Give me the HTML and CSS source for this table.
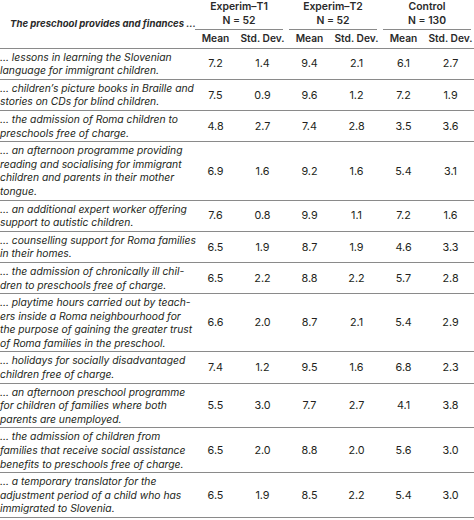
FILE: index.html
```html
<!DOCTYPE html>
<html lang="en">
<head>
<meta charset="utf-8">
<title>Preschool table</title>
<link rel="stylesheet" href="styles.css">
</head>
<body>
<table class="tbl">
  <colgroup>
    <col class="c-item">
    <col class="c-num"><col class="c-num"><col class="c-num"><col class="c-num"><col class="c-num"><col class="c-num">
  </colgroup>
  <thead>
    <tr class="grp-row">
      <th class="item-head" rowspan="2">The preschool provides and finances …</th>
      <th colspan="2" class="grp"><div class="grp-in">Experim–T1<br>N = 52</div></th>
      <th colspan="2" class="grp"><div class="grp-in">Experim–T2<br>N = 52</div></th>
      <th colspan="2" class="grp"><div class="grp-in">Control<br>N = 130</div></th>
    </tr>
    <tr class="sub-row">
      <th>Mean</th><th>Std. Dev.</th><th>Mean</th><th>Std. Dev.</th><th>Mean</th><th>Std. Dev.</th>
    </tr>
  </thead>
  <tbody>
    <tr><td class="item">… lessons in learning the Slovenian<br>language for immigrant children.</td><td>7.2</td><td>1.4</td><td>9.4</td><td>2.1</td><td>6.1</td><td>2.7</td></tr>
    <tr><td class="item">… children’s picture books in Braille and<br>stories on CDs for blind children.</td><td>7.5</td><td>0.9</td><td>9.6</td><td>1.2</td><td>7.2</td><td>1.9</td></tr>
    <tr><td class="item">… the admission of Roma children to<br>preschools free of charge.</td><td>4.8</td><td>2.7</td><td>7.4</td><td>2.8</td><td>3.5</td><td>3.6</td></tr>
    <tr><td class="item">… an afternoon programme providing<br>reading and socialising for immigrant<br>children and parents in their mother<br>tongue.</td><td>6.9</td><td>1.6</td><td>9.2</td><td>1.6</td><td>5.4</td><td>3.1</td></tr>
    <tr><td class="item">… an additional expert worker offering<br>support to autistic children.</td><td>7.6</td><td>0.8</td><td>9.9</td><td>1.1</td><td>7.2</td><td>1.6</td></tr>
    <tr><td class="item">… counselling support for Roma families<br>in their homes.</td><td>6.5</td><td>1.9</td><td>8.7</td><td>1.9</td><td>4.6</td><td>3.3</td></tr>
    <tr><td class="item">… the admission of chronically ill chil-<br>dren to preschools free of charge.</td><td>6.5</td><td>2.2</td><td>8.8</td><td>2.2</td><td>5.7</td><td>2.8</td></tr>
    <tr><td class="item">… playtime hours carried out by teach-<br>ers inside a Roma neighbourhood for<br>the purpose of gaining the greater trust<br>of Roma families in the preschool.</td><td>6.6</td><td>2.0</td><td>8.7</td><td>2.1</td><td>5.4</td><td>2.9</td></tr>
    <tr><td class="item">… holidays for socially disadvantaged<br>children free of charge.</td><td>7.4</td><td>1.2</td><td>9.5</td><td>1.6</td><td>6.8</td><td>2.3</td></tr>
    <tr><td class="item">… an afternoon preschool programme<br>for children of families where both<br>parents are unemployed.</td><td>5.5</td><td>3.0</td><td>7.7</td><td>2.7</td><td>4.1</td><td>3.8</td></tr>
    <tr><td class="item">… the admission of children from<br>families that receive social assistance<br>benefits to preschools free of charge.</td><td>6.5</td><td>2.0</td><td>8.8</td><td>2.0</td><td>5.6</td><td>3.0</td></tr>
    <tr><td class="item">… a temporary translator for the<br>adjustment period of a child who has<br>immigrated to Slovenia.</td><td>6.5</td><td>1.9</td><td>8.5</td><td>2.2</td><td>5.4</td><td>3.0</td></tr>
  </tbody>
</table>
</body>
</html>
```
FILE: styles.css
```css
html, body {
  margin: 0;
  padding: 0;
  background: #ffffff;
}
body {
  font-family: Inter, "Open Sans", sans-serif;
  color: #231f20;
  overflow: hidden;
}
.tbl {
  width: 474px;
  table-layout: fixed;
  border-collapse: collapse;
  font-size: 10.8px;
  line-height: 13.6px;
}
.c-item { width: 192px; }
.c-num { width: 47px; }
.tbl th, .tbl td {
  padding: 0;
  text-align: center;
  vertical-align: middle;
  white-space: nowrap;
}
.tbl thead th {
  font-weight: 600;
  font-size: 10.2px;
  color: #2a2a2a;
}
.tbl thead th.grp {
  font-size: 10.4px;
}
.tbl thead th.item-head {
  font-style: italic;
  font-weight: 700;
  font-size: 9.6px;
  text-align: left;
  padding-left: 10px;
  border-bottom: 1.5px solid #8a8a8a;
}
.grp {
  padding: 0 0 1px 0;
}
.grp-in {
  border-bottom: 1.5px solid #8a8a8a;
  margin: 0 3px;
  padding-bottom: 1px;
  line-height: 14px;
}
.sub-row th {
  padding: 2px 0 2px;
  border-bottom: 1.5px solid #8a8a8a;
}
.tbl tbody td {
  padding: 2px 0 1px;
  border-bottom: 1.5px solid #8a8a8a;
}
.tbl tbody td.item {
  text-align: left;
  font-style: italic;
  font-size: 10.3px;
}
```
